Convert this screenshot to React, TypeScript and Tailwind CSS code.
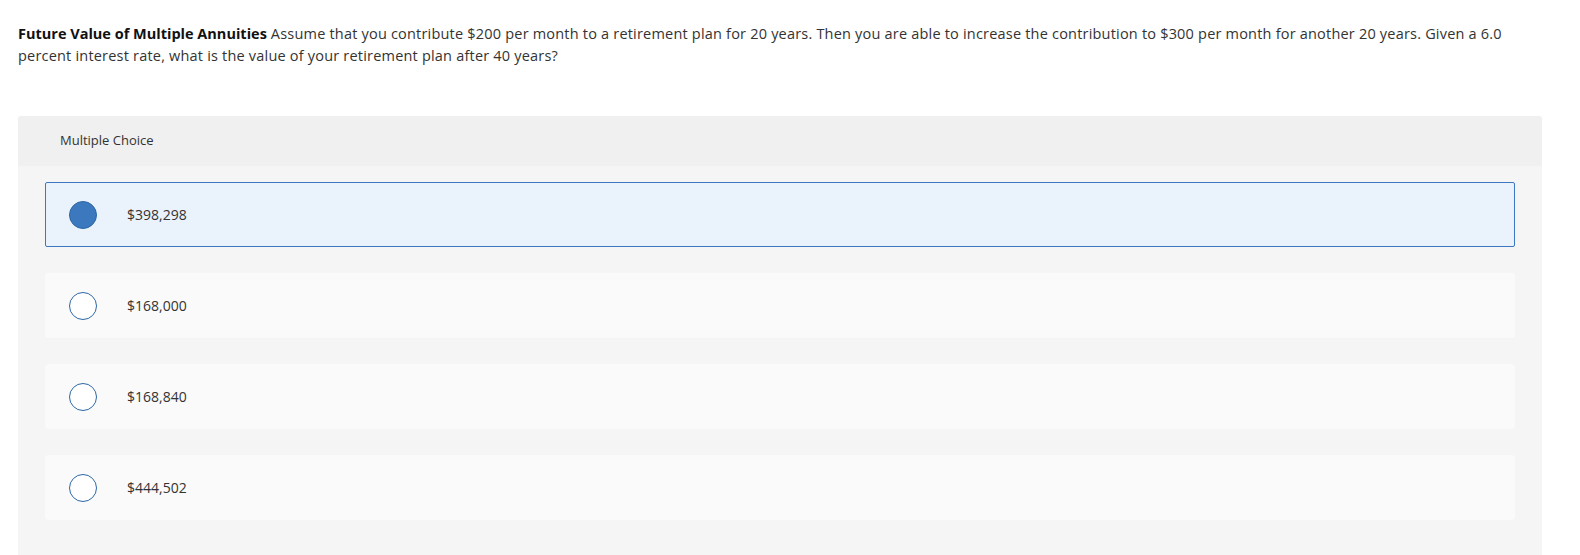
import React, { useState } from 'react';

const choices = ['$398,298', '$168,000', '$168,840', '$444,502'];

const font = { fontFamily: '"Open Sans", "Liberation Sans", sans-serif' };

export default function App() {
  const [selected, setSelected] = useState(0);

  return (
    <main className="min-h-screen bg-white text-[#333] pl-[18px] pr-[38px]" style={font}>
      <p className="pt-[23px] text-[14.5px] leading-[22px] tracking-[0.2px] text-[#333]">
        <b className="font-bold text-[#111] tracking-normal">Future Value of Multiple Annuities</b>{' '}
        Assume that you contribute $200 per month to a retirement plan for 20 years. Then you are able to increase the
        contribution to $300 per month for another 20 years. Given a 6.0 percent interest rate, what is the value of
        your retirement plan after 40 years?
      </p>

      <section className="mt-[49px] rounded-t-[3px] bg-[#f5f5f5] overflow-hidden">
        <div className="h-[50px] bg-[#f0f0f0] pl-[42px] flex items-center text-[13px] text-[#333]">
          Multiple Choice
        </div>
        <div className="px-[27px] pt-[16px] pb-[40px] flex flex-col gap-[26px]">
          {choices.map((c, i) => {
            const on = i === selected;
            return (
              <button
                key={c}
                onClick={() => setSelected(i)}
                className={
                  on
                    ? 'h-[65px] flex items-center rounded-[2px] border border-[#3b78c1] bg-[#eaf2fb] text-left'
                    : 'h-[65px] flex items-center rounded-[4px] border border-transparent bg-[#fafafa] text-left'
                }
              >
                <span
                  className={
                    on
                      ? 'ml-[23px] w-[28px] h-[28px] rounded-full border border-[#2d67a6] bg-[#3b78bd]'
                      : 'ml-[23px] w-[28px] h-[28px] rounded-full border border-[#2d67a6] bg-white'
                  }
                />
                <span className="ml-[30px] text-[14px] text-[#333]">{c}</span>
              </button>
            );
          })}
        </div>
      </section>
    </main>
  );
}
